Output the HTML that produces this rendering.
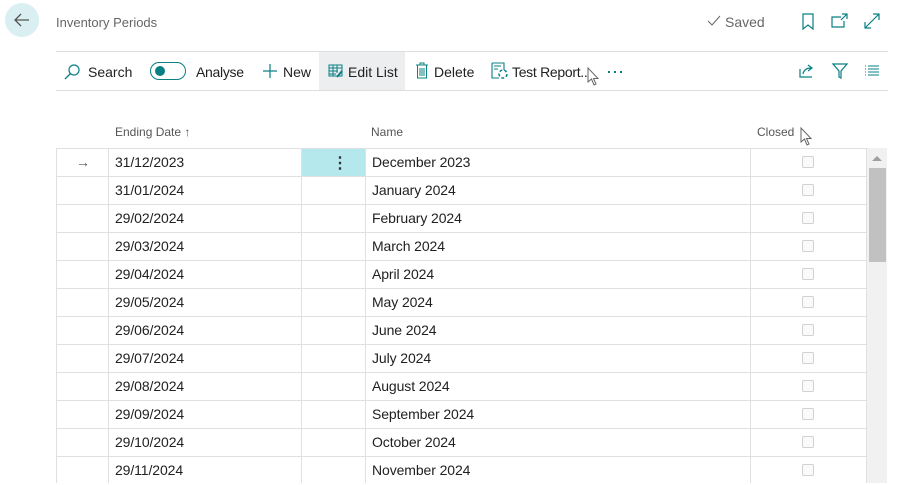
<!DOCTYPE html>
<html><head><style>
*{margin:0;padding:0;box-sizing:border-box}
body{width:917px;height:483px;overflow:hidden;background:#fff;font-family:"Liberation Sans",sans-serif;color:#212121;position:relative}
.a{position:absolute}
.t{font-size:14px;white-space:nowrap}
.row{position:absolute;left:56px;width:810px;height:28px;border-top:1px solid #e0e0e0}
.row div{position:absolute;top:0;height:28px;line-height:26px;font-size:14px;letter-spacing:-0.1px}
.vl{position:absolute;top:148px;width:1px;height:335px;background:#e0e0e0}
.cb{position:absolute;left:746px;top:7px;width:12px;height:12px;border:1px solid #d0d0d0;border-radius:2px;background:#fafafa}
</style></head><body>
<div class="a" style="left:5px;top:3px;width:34px;height:34px;border-radius:50%;background:#d9eff2"></div>
<svg class="a" style="left:12px;top:10px" width="20" height="20"><path d="M17 10H3M9 4L3 10L9 16" stroke="#555" stroke-width="1.3" fill="none"/></svg>
<div class="a t" style="left:56px;top:15px;color:#666;font-size:13px">Inventory Periods</div>
<svg class="a" style="left:707px;top:15px" width="14" height="12"><path d="M1 6L5 10L13 1" stroke="#666" fill="none"/></svg>
<div class="a t" style="left:725px;top:14px;color:#666">Saved</div>
<svg class="a" style="left:800px;top:13px" width="16" height="18"><path d="M3 1H13V16L8 12L3 16Z" stroke="#0a7f84" stroke-width="1.2" fill="none"/></svg>
<svg class="a" style="left:830px;top:13px" width="18" height="16"><path d="M11 4H2V14H14V8M12 1H17V6M17 1L11 7" stroke="#0a7f84" stroke-width="1.2" fill="none"/></svg>
<svg class="a" style="left:863px;top:12px" width="18" height="18"><path d="M2 16L16 2M10 2H16V8M2 10V16H8" stroke="#0a7f84" stroke-width="1.2" fill="none"/></svg>
<div class="a" style="left:56px;top:51px;width:832px;height:1px;background:#ddd"></div>
<div class="a" style="left:56px;top:90px;width:832px;height:1px;background:#ddd"></div>
<div class="a" style="left:319px;top:52px;width:86px;height:38px;background:#eceef0"></div>
<svg class="a" style="left:63px;top:63px" width="18" height="18"><circle cx="11" cy="7" r="5" stroke="#0a7f84" stroke-width="1.2" fill="none"/><path d="M7.5 10.5L2 16" stroke="#0a7f84" stroke-width="1.3"/></svg>
<div class="a t" style="left:88px;top:64px">Search</div>
<div class="a" style="left:150px;top:62px;width:36px;height:18px;border:1.5px solid #0a7f84;border-radius:9px"></div>
<div class="a" style="left:155px;top:66px;width:10px;height:10px;border-radius:50%;background:#0a7f84"></div>
<div class="a t" style="left:196px;top:64px;letter-spacing:-0.3px">Analyse</div>
<svg class="a" style="left:262px;top:63px" width="16" height="16"><path d="M8 1V15M1 8H15" stroke="#0a7f84" stroke-width="1.2"/></svg>
<div class="a t" style="left:283px;top:64px">New</div>
<svg class="a" style="left:328px;top:64px" width="16" height="14"><path d="M1 1H14V12H1ZM1 4H14M1 7H10M1 10H8M5 1V12M9 1V9" stroke="#0a7f84" stroke-width="1" fill="none"/><path d="M9 13L14 7" stroke="#0a7f84" stroke-width="2"/></svg>
<div class="a t" style="left:348px;top:64px">Edit List</div>
<svg class="a" style="left:415px;top:62px" width="14" height="18"><path d="M1 3H13M5 3V1H9V3M2.5 3V16H11.5V3M5 6V14M7 6V14M9 6V14" stroke="#0a7f84" stroke-width="1" fill="none"/></svg>
<div class="a t" style="left:434px;top:64px">Delete</div>
<svg class="a" style="left:491px;top:62px" width="18" height="18"><path d="M1 1H13V8M1 1V16H8M3 4H10M3 7H7" stroke="#0a7f84" stroke-width="1.1" fill="none"/><circle cx="12" cy="12" r="4" stroke="#0a7f84" stroke-width="1.5" fill="none" stroke-dasharray="3 2"/></svg>
<div class="a t" style="left:512px;top:64px;letter-spacing:-0.3px">Test Report...</div>
<svg class="a" style="left:587px;top:67px" width="14" height="20"><path d="M1 1V15L4.5 12L7 18L9 17L6.5 11.5H11Z" fill="#fff" stroke="#666" stroke-width="1"/></svg>
<div class="a" style="left:608px;top:71px;width:2px;height:2px;background:#0a7f84;box-shadow:6px 0 #0a7f84,12px 0 #0a7f84"></div>
<svg class="a" style="left:798px;top:63px" width="18" height="16"><path d="M2 6V14H14M5 11C6 6 10 5 13 5M10 2L14 5L10 8" stroke="#0a7f84" stroke-width="1.2" fill="none"/></svg>
<svg class="a" style="left:832px;top:63px" width="16" height="16"><path d="M1 1H15L9 8V15L7 14V8Z" stroke="#0a7f84" stroke-width="1.2" fill="none"/></svg>
<svg class="a" style="left:864px;top:65px" width="16" height="12"><path d="M1 1H2M4 1H15M1 4H2M4 4H15M1 7H2M4 7H15M1 10H2M4 10H15" stroke="#0a7f84" stroke-width="1.1"/></svg>
<div class="a" style="left:115px;top:125px;font-size:12px;color:#555">Ending Date ↑</div>
<div class="a" style="left:371px;top:125px;font-size:12px;color:#555">Name</div>
<div class="a" style="left:757px;top:125px;font-size:12px;color:#555">Closed</div>
<svg class="a" style="left:800px;top:127px" width="14" height="20"><path d="M1 1V15L4.5 12L7 18L9 17L6.5 11.5H11Z" fill="#fff" stroke="#666" stroke-width="1"/></svg>
<div class="a" style="left:301px;top:149px;width:64px;height:27px;background:#b5e8ed"></div>
<div class="a" style="left:332px;top:153px;font-size:16px;color:#333;font-weight:bold">⋮</div>
<div class="vl" style="left:56px"></div><div class="vl" style="left:108px"></div><div class="vl" style="left:301px"></div><div class="vl" style="left:365px"></div><div class="vl" style="left:750px"></div><div class="vl" style="left:866px"></div>
<div class="a" style="left:867px;top:148px;width:20px;height:335px;background:#f1f1f1"></div>
<div class="a" style="left:872px;top:156px;width:0;height:0;border-left:5px solid transparent;border-right:5px solid transparent;border-bottom:5px solid #a0a0a0"></div>
<div class="a" style="left:869px;top:168px;width:17px;height:94px;background:#c1c1c1"></div>
<div class="row" style="top:148px"><div style="left:20px;color:#555">→</div><div style="left:59px">31/12/2023</div><div style="left:316px">December 2023</div><span class="cb"></span></div>
<div class="row" style="top:176px"><div style="left:59px">31/01/2024</div><div style="left:316px">January 2024</div><span class="cb"></span></div>
<div class="row" style="top:204px"><div style="left:59px">29/02/2024</div><div style="left:316px">February 2024</div><span class="cb"></span></div>
<div class="row" style="top:232px"><div style="left:59px">29/03/2024</div><div style="left:316px">March 2024</div><span class="cb"></span></div>
<div class="row" style="top:260px"><div style="left:59px">29/04/2024</div><div style="left:316px">April 2024</div><span class="cb"></span></div>
<div class="row" style="top:288px"><div style="left:59px">29/05/2024</div><div style="left:316px">May 2024</div><span class="cb"></span></div>
<div class="row" style="top:316px"><div style="left:59px">29/06/2024</div><div style="left:316px">June 2024</div><span class="cb"></span></div>
<div class="row" style="top:344px"><div style="left:59px">29/07/2024</div><div style="left:316px">July 2024</div><span class="cb"></span></div>
<div class="row" style="top:372px"><div style="left:59px">29/08/2024</div><div style="left:316px">August 2024</div><span class="cb"></span></div>
<div class="row" style="top:400px"><div style="left:59px">29/09/2024</div><div style="left:316px">September 2024</div><span class="cb"></span></div>
<div class="row" style="top:428px"><div style="left:59px">29/10/2024</div><div style="left:316px">October 2024</div><span class="cb"></span></div>
<div class="row" style="top:456px"><div style="left:59px">29/11/2024</div><div style="left:316px">November 2024</div><span class="cb"></span></div>
</body></html>
